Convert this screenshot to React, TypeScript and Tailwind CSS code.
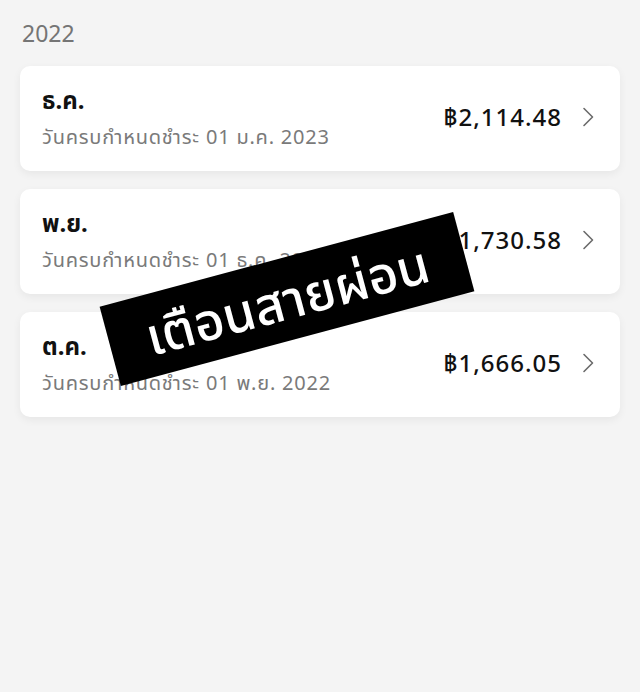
const items = [
  { month: 'ธ.ค.', due: 'วันครบกำหนดชำระ 01 ม.ค. 2023', amount: '฿2,114.48' },
  { month: 'พ.ย.', due: 'วันครบกำหนดชำระ 01 ธ.ค. 2022', amount: '฿1,730.58' },
  { month: 'ต.ค.', due: 'วันครบกำหนดชำระ 01 พ.ย. 2022', amount: '฿1,666.05' },
];

function Chevron() {
  return (
    <svg width="12" height="20" viewBox="0 0 12 20" fill="none" className="shrink-0">
      <path d="M2 1.5 L10.5 10 L2 18.5" stroke="#6b6b6b" strokeWidth="1.6" strokeLinecap="round" strokeLinejoin="round" />
    </svg>
  );
}

export default function App() {
  return (
    <div
      className="relative w-[640px] h-[692px] overflow-hidden bg-[#f4f4f4] px-5"
      style={{ fontFamily: '"Noto Sans", "Noto Sans Thai", Roboto, sans-serif' }}
    >
      {/* Year header */}
      <div className="pt-[18px] pl-[2px] text-[23px] leading-[30px] text-[#757575]">2022</div>

      {/* Statement cards */}
      <div className="mt-[18px] flex flex-col gap-[18px]">
        {items.map((item) => (
          <div
            key={item.month}
            className="h-[105px] bg-white rounded-[10px] shadow-[0_3px_8px_rgba(0,0,0,0.06)] pl-[22px] pr-[26px] flex items-center"
          >
            <div className="flex-1 flex flex-col -mt-[2px]">
              <div className="text-[24px] leading-[30px] font-bold text-[#111]">{item.month}</div>
              <div className="mt-[8px] text-[20px] leading-[28px] tracking-[0.8px] text-[#7a7a7a]">{item.due}</div>
            </div>
            <div className="text-[24px] tracking-[1px] font-medium text-[#111] mr-[20px] -mt-[4px]">{item.amount}</div>
            <div className="-mt-[4px]">
              <Chevron />
            </div>
          </div>
        ))}
      </div>

      {/* Overlay label */}
      <div className="absolute left-[104px] top-[258px] w-[366px] h-[82px] bg-black -rotate-[15deg] flex items-center justify-center">
        <span className="text-white text-[52px] font-medium leading-none">เตือนสายผ่อน</span>
      </div>
    </div>
  );
}
